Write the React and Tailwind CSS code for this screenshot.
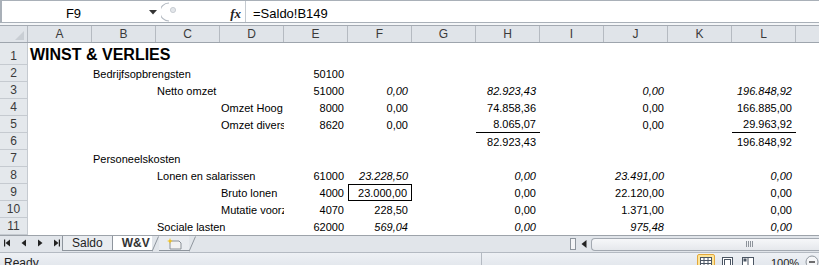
import clsx from "clsx";

const COLS = ["A", "B", "C", "D", "E", "F", "G", "H", "I", "J", "K", "L"];

const start = {
  A: "col-start-2",
  B: "col-start-3",
  C: "col-start-4",
  D: "col-start-5",
  E: "col-start-6",
  F: "col-start-7",
  G: "col-start-8",
  H: "col-start-9",
  I: "col-start-10",
  J: "col-start-11",
  K: "col-start-12",
  L: "col-start-13",
};

const span = { 1: "col-span-1", 2: "col-span-2", 3: "col-span-3", 6: "col-span-6" };

// r = right aligned number, it = italic, line = bottom border, sel = selected cell
const rows = [
  { n: 1, tall: true, cells: [{ col: "A", span: 6, text: "WINST & VERLIES", big: true }] },
  {
    n: 2,
    cells: [
      { col: "B", span: 3, text: "Bedrijfsopbrengsten" },
      { col: "E", text: "50100", r: true },
    ],
  },
  {
    n: 3,
    cells: [
      { col: "C", span: 2, text: "Netto omzet" },
      { col: "E", text: "51000", r: true },
      { col: "F", text: "0,00", r: true, it: true },
      { col: "H", text: "82.923,43", r: true, it: true },
      { col: "J", text: "0,00", r: true, it: true },
      { col: "L", text: "196.848,92", r: true, it: true },
    ],
  },
  {
    n: 4,
    cells: [
      { col: "D", text: "Omzet Hoog" },
      { col: "E", text: "8000", r: true },
      { col: "F", text: "0,00", r: true },
      { col: "H", text: "74.858,36", r: true },
      { col: "J", text: "0,00", r: true },
      { col: "L", text: "166.885,00", r: true },
    ],
  },
  {
    n: 5,
    cells: [
      { col: "D", text: "Omzet diversen" },
      { col: "E", text: "8620", r: true },
      { col: "F", text: "0,00", r: true },
      { col: "H", text: "8.065,07", r: true, line: true },
      { col: "J", text: "0,00", r: true },
      { col: "L", text: "29.963,92", r: true, line: true },
    ],
  },
  {
    n: 6,
    cells: [
      { col: "H", text: "82.923,43", r: true },
      { col: "L", text: "196.848,92", r: true },
    ],
  },
  { n: 7, cells: [{ col: "B", span: 3, text: "Personeelskosten" }] },
  {
    n: 8,
    cells: [
      { col: "C", span: 2, text: "Lonen en salarissen" },
      { col: "E", text: "61000", r: true },
      { col: "F", text: "23.228,50", r: true, it: true },
      { col: "H", text: "0,00", r: true, it: true },
      { col: "J", text: "23.491,00", r: true, it: true },
      { col: "L", text: "0,00", r: true, it: true },
    ],
  },
  {
    n: 9,
    cells: [
      { col: "D", text: "Bruto lonen" },
      { col: "E", text: "4000", r: true },
      { col: "F", text: "23.000,00", r: true, sel: true },
      { col: "H", text: "0,00", r: true },
      { col: "J", text: "22.120,00", r: true },
      { col: "L", text: "0,00", r: true },
    ],
  },
  {
    n: 10,
    cells: [
      { col: "D", text: "Mutatie voorziening" },
      { col: "E", text: "4070", r: true },
      { col: "F", text: "228,50", r: true },
      { col: "H", text: "0,00", r: true },
      { col: "J", text: "1.371,00", r: true },
      { col: "L", text: "0,00", r: true },
    ],
  },
  {
    n: 11,
    cells: [
      { col: "C", span: 2, text: "Sociale lasten" },
      { col: "E", text: "62000", r: true },
      { col: "F", text: "569,04", r: true, it: true },
      { col: "H", text: "0,00", r: true, it: true },
      { col: "J", text: "975,48", r: true, it: true },
      { col: "L", text: "0,00", r: true, it: true },
    ],
  },
];

const Tri = ({ dir = "left", bar }) => (
  <svg width="8" height="8" viewBox="0 0 8 8" className="shrink-0">
    {dir === "left" ? (
      <path d="M6 0.5 L1.5 4 L6 7.5 Z" fill="#222" />
    ) : (
      <path d="M2 0.5 L6.5 4 L2 7.5 Z" fill="#222" />
    )}
    {bar && dir === "left" && <rect x="0" y="0.5" width="1.2" height="7" fill="#222" />}
    {bar && dir === "right" && <rect x="6.8" y="0.5" width="1.2" height="7" fill="#222" />}
  </svg>
);

const Slant = () => (
  <svg width="7" height="16" viewBox="0 0 7 16" className="shrink-0">
    <path d="M0 15.5 L6.5 0.5" stroke="#8e959d" strokeWidth="1" fill="none" />
  </svg>
);

function Row({ n, tall, cells }) {
  return (
    <div
      className={clsx(
        "grid grid-cols-[28px_repeat(12,64px)_1fr]",
        tall ? "h-[22px]" : "h-[17px]"
      )}
    >
      <div className="col-start-1 row-start-1 flex items-end justify-center border-r border-b border-[#c5cad0] bg-[#e4e8ec] pb-[2px] text-[12px] leading-none text-[#3a3a3a]">
        {n}
      </div>
      {cells.map((c, i) => (
        <div
          key={i}
          className={clsx(
            start[c.col],
            span[c.span || 1],
            "row-start-1 flex min-w-0 items-end overflow-hidden whitespace-nowrap leading-none text-black",
            c.big ? "pb-[2px] pl-[2px] text-[16px] font-bold" : "text-[11px]",
            !c.big && !c.sel && "pb-[2px]",
            c.r ? "justify-end pr-[4px]" : !c.big && "pl-[1px]",
            c.it && "italic",
            c.line && "border-b border-black",
            c.sel && "border border-black pb-[1px] pr-[3px]"
          )}
        >
          {c.text}
        </div>
      ))}
    </div>
  );
}

export default function App() {
  return (
    <div className="flex h-[265px] w-[819px] flex-col overflow-hidden bg-white font-['Liberation_Sans',Arial,sans-serif] text-black">
      {/* Formula bar */}
      <div className="flex h-[23px] shrink-0 items-stretch border-t border-b border-l-2 border-[#a9b0b8] bg-white">
        <div className="flex w-[143px] items-center justify-center pt-[3px] text-[13px] leading-none">F9</div>
        <div className="flex w-[16px] items-center justify-center pt-[2px]">
          <svg width="8" height="5" viewBox="0 0 8 5">
            <path d="M0 0 H8 L4 4.5 Z" fill="#333" />
          </svg>
        </div>
        <div className="flex w-[84px] items-center justify-between pr-[4px]">
          <svg width="20" height="20" viewBox="0 0 20 20">
            <path d="M8 1 A9 9 0 0 0 8 19" stroke="#b4bac2" strokeWidth="1.2" fill="none" />
            <circle cx="12" cy="8" r="2.6" fill="#e3e6ea" stroke="#c0c5cb" strokeWidth="0.8" />
          </svg>
          <span className="pt-[3px] font-['Liberation_Serif',serif] text-[13px] font-bold italic leading-none text-[#222]">
            fx
          </span>
        </div>
        <div className="flex flex-1 items-center border-l border-[#c5cad0] pl-[7px] pt-[3px] text-[13px] leading-none">
          =Saldo!B149
        </div>
      </div>
      <div className="h-[3px] shrink-0 border-b border-[#a4aab2] bg-[#f4f6f8]" />

      {/* Column headers */}
      <div className="grid h-[17px] shrink-0 grid-cols-[28px_repeat(12,64px)_1fr] border-b border-[#9ea5ad] bg-[#e0e4e9]">
        <div className="relative border-r border-[#b5bac1]">
          <svg width="9" height="9" viewBox="0 0 9 9" className="absolute right-[3px] bottom-[2px]">
            <path d="M9 0 V9 H0 Z" fill="#c9ced4" />
          </svg>
        </div>
        {COLS.map((c) => (
          <div
            key={c}
            className="flex items-center justify-center border-r border-[#b5bac1] text-[12px] leading-none text-[#3a3a3a]"
          >
            {c}
          </div>
        ))}
        <div />
      </div>

      {/* Sheet */}
      <div className="shrink-0">
        {rows.map((r) => (
          <Row key={r.n} {...r} />
        ))}
      </div>

      {/* Sheet tabs + horizontal scrollbar */}
      <div className="flex h-[17px] shrink-0 items-stretch border-t border-[#9da3aa] bg-[#e1e5ea]">
        <div className="flex w-[62px] items-center gap-[8px] pl-[4px] pb-[2px]">
          <Tri dir="left" bar />
          <Tri dir="left" />
          <Tri dir="right" />
          <Tri dir="right" bar />
        </div>
        <div className="flex h-[15px] items-center border-l border-r border-b border-[#8e959d] bg-[#e9ecf0] px-[9px] text-[12px] leading-none text-[#222]">
          Saldo
        </div>
        <div className="flex h-[15px] items-center border-b border-[#8e959d] bg-white pl-[9px] pr-[2px] text-[12px] font-bold leading-none text-[#333]">
          W&amp;V
        </div>
        <Slant />
        <div className="flex h-[15px] w-[30px] items-center justify-center border-b border-[#8e959d] bg-[#e9ecf0]">
          <svg width="16" height="13" viewBox="0 0 16 13">
            <path d="M4 4 H13 L15 6 V12 H4 Z" fill="#f2f2f2" stroke="#8a9097" strokeWidth="1" />
            <path d="M4 1 L4.8 3.2 L7 4 L4.8 4.8 L4 7 L3.2 4.8 L1 4 L3.2 3.2 Z" fill="#f3c21b" />
          </svg>
        </div>
        <Slant />
        <div className="flex-1" />
        <div className="flex w-[249px] items-center">
          <div className="h-[12px] w-[6px] border border-[#8e959d] bg-[#f4f5f7]" />
          <div className="flex w-[15px] items-center justify-center">
            <svg width="6" height="8" viewBox="0 0 6 8">
              <path d="M5.5 0 L0.5 4 L5.5 8 Z" fill="#222" />
            </svg>
          </div>
          <div className="flex h-[13px] flex-1 items-center justify-end rounded-l-[4px] border border-r-0 border-[#a3a9b1] bg-gradient-to-b from-[#f6f7f9] to-[#e5e8ec] pr-[66px]">
            <div className="flex gap-[1px]">
              <span className="h-[6px] w-px bg-[#8d939a]" />
              <span className="h-[6px] w-px bg-[#8d939a]" />
              <span className="h-[6px] w-px bg-[#8d939a]" />
              <span className="h-[6px] w-px bg-[#8d939a]" />
            </div>
          </div>
        </div>
      </div>

      {/* Status bar */}
      <div className="flex h-[24px] shrink-0 items-start border-t border-[#b4bac2] bg-gradient-to-b from-[#eef1f5] to-[#dadfe6] text-[12px] leading-none text-[#222]">
        <div className="w-[482px] border-r border-[#b4bac2] pt-[4px] pl-[4px]">Ready</div>
        <div className="flex-1" />
        <div className="flex items-start gap-[3px] pt-[1px]">
          <div className="flex h-[16px] w-[18px] items-center justify-center rounded-[2px] border border-[#e3a73a] bg-[#fde59a]">
            <svg width="12" height="10" viewBox="0 0 12 10">
              <rect x="0.5" y="0.5" width="11" height="9" fill="#fff" stroke="#4a5563" />
              <path d="M4 0.5 V9.5 M8 0.5 V9.5 M0.5 3.5 H11.5 M0.5 6.5 H11.5" stroke="#4a5563" />
            </svg>
          </div>
          <div className="flex h-[16px] w-[18px] items-center justify-center">
            <svg width="11" height="11" viewBox="0 0 11 11">
              <rect x="0.5" y="0.5" width="10" height="10" fill="#fff" stroke="#4a5563" />
              <rect x="2.5" y="2.5" width="6" height="6" fill="none" stroke="#4a5563" />
            </svg>
          </div>
          <div className="flex h-[16px] w-[18px] items-center justify-center">
            <svg width="12" height="10" viewBox="0 0 12 10">
              <rect x="0.5" y="0.5" width="11" height="9" fill="#fff" stroke="#4a5563" />
              <path d="M6 0.5 V9.5" stroke="#4a5563" />
              <rect x="1.5" y="1.5" width="3" height="3" fill="#4a5563" />
            </svg>
          </div>
        </div>
        <div className="w-[40px] pt-[5px] pl-[14px] text-[11px]">100%</div>
        <div className="pl-[8px] pt-[2px]">
          <svg width="14" height="14" viewBox="0 0 14 14">
            <circle cx="7" cy="7" r="6" fill="#f5f6f8" stroke="#8e959d" />
            <path d="M4 7 H10" stroke="#333" strokeWidth="1.4" />
          </svg>
        </div>
      </div>
    </div>
  );
}
